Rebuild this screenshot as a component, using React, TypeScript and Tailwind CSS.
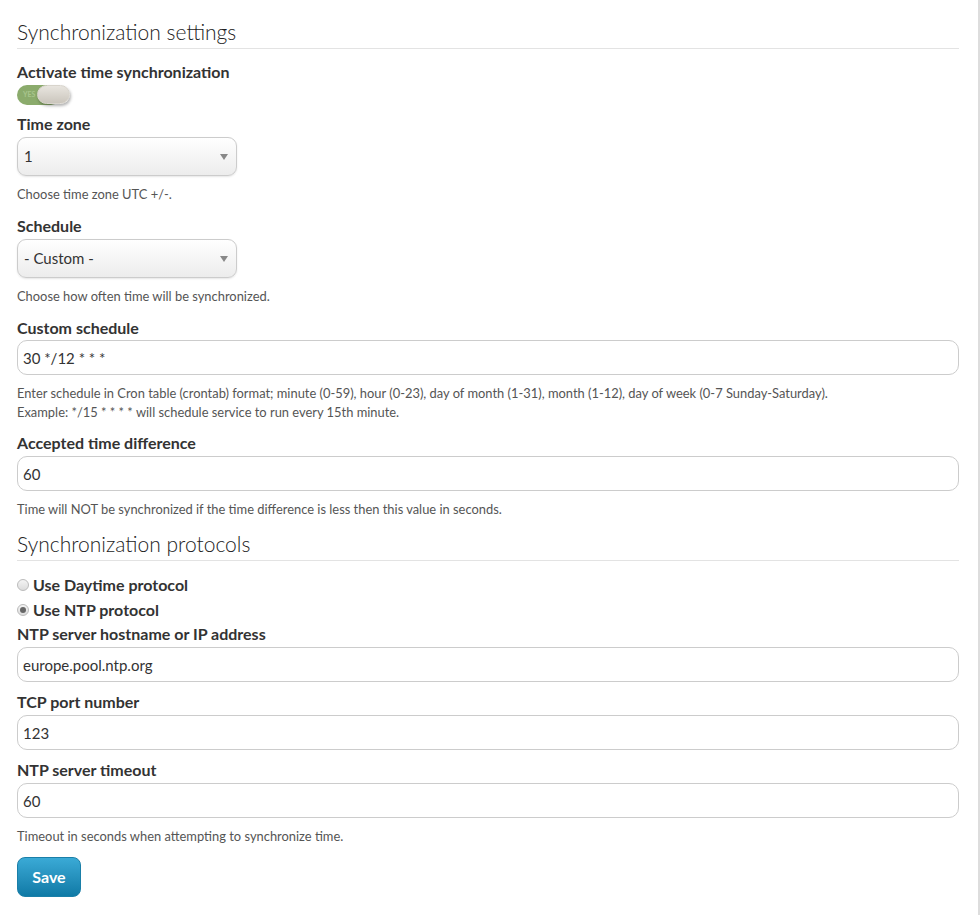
import { useState } from 'react'

const FONT = { fontFamily: 'Lato, "Noto Sans", sans-serif' }

function Label({ children }: { children: React.ReactNode }) {
  return <label className="block text-[16px] font-bold leading-[20px] text-[#333]">{children}</label>
}

function Help({ children }: { children: React.ReactNode }) {
  return <div className="text-[12.9px] leading-[19px] text-[#555]">{children}</div>
}

function TextInput({ value }: { value: string }) {
  const [v, setV] = useState(value)
  return (
    <input
      value={v}
      onChange={e => setV(e.target.value)}
      className="block h-[35px] w-full rounded-[10px] border border-[#ccc] bg-white px-[5px] text-[15px] text-[#333] outline-none"
    />
  )
}

function FakeSelect({ value }: { value: string }) {
  return (
    <div className="relative flex h-[39px] w-[220px] items-center rounded-[9px] border border-[#ccc] bg-gradient-to-b from-white to-[#ececec] px-[6px] text-[15px] text-[#333] shadow-[0_1px_2px_rgba(0,0,0,0.1)]">
      {value}
      <span className="absolute right-[8px] top-[16px] h-0 w-0 border-x-[4px] border-t-[6px] border-x-transparent border-t-[#888]" />
    </div>
  )
}

function Heading({ children }: { children: React.ReactNode }) {
  return (
    <h2 className="border-b border-[#e3e3e3] pb-[3px] text-[21px] font-light leading-[26px] text-[#222]">{children}</h2>
  )
}

function Radio({ label, checked }: { label: string; checked?: boolean }) {
  return (
    <label className="flex items-center gap-[4px] text-[16px] font-bold leading-[25px] text-[#333]">
      <span className="flex h-[12px] w-[12px] items-center justify-center rounded-full border border-[#bbb] bg-gradient-to-b from-[#f4f4f4] to-[#dcdcdc]">
        {checked && <span className="h-[6px] w-[6px] rounded-full bg-[#666]" />}
      </span>
      {label}
    </label>
  )
}

export default function App() {
  return (
    <div style={FONT} className="min-h-[915px] border-r-2 border-[#ddd] bg-white">
      <div className="mr-[19px] pl-[17px] pt-[19px]">
        <Heading>Synchronization settings</Heading>

        <div className="mt-[13px]">
          <Label>Activate time synchronization</Label>
          <div className="relative mt-[3px] h-[20px] w-[54px]">
            <div className="absolute left-0 top-0 h-[20px] w-[44px] rounded-full bg-[#8bab6c]">
              <span className="absolute left-[6px] top-[5px] text-[7px] font-bold leading-[9px] text-[#a8c58c]">YES</span>
            </div>
            <div className="absolute left-[20px] top-0 h-[19px] w-[33px] rounded-full border border-[#d8d4cc] bg-gradient-to-b from-[#e8e5df] to-[#cbc6bd] shadow-[1px_2px_3px_rgba(0,0,0,0.3)]" />
          </div>
        </div>

        <div className="mt-[9px]">
          <Label>Time zone</Label>
          <div className="mt-[3px]">
            <FakeSelect value="1" />
          </div>
          <div className="mt-[9px]">
            <Help>Choose time zone UTC +/-.</Help>
          </div>
        </div>

        <div className="mt-[12px]">
          <Label>Schedule</Label>
          <div className="mt-[3px]">
            <FakeSelect value="- Custom -" />
          </div>
          <div className="mt-[9px]">
            <Help>Choose how often time will be synchronized.</Help>
          </div>
        </div>

        <div className="mt-[12px]">
          <Label>Custom schedule</Label>
          <div className="mt-[2px]">
            <TextInput value="30 */12 * * *" />
          </div>
          <div className="mt-[9px]">
            <Help>
              Enter schedule in Cron table (crontab) format; minute (0-59), hour (0-23), day of month (1-31), month (1-12), day of week (0-7 Sunday-Saturday).
              <br />
              Example: */15 * * * * will schedule service to run every 15th minute.
            </Help>
          </div>
        </div>

        <div className="mt-[11px]">
          <Label>Accepted time difference</Label>
          <div className="mt-[3px]">
            <TextInput value="60" />
          </div>
          <div className="mt-[9px]">
            <Help>Time will NOT be synchronized if the time difference is less then this value in seconds.</Help>
          </div>
        </div>

        <div className="mt-[12px]">
          <Heading>Synchronization protocols</Heading>
        </div>

        <div className="mt-[11px]">
          <Radio label="Use Daytime protocol" />
          <Radio label="Use NTP protocol" checked />
        </div>

        <div className="mt-[2px]">
          <Label>NTP server hostname or IP address</Label>
          <div className="mt-[3px]">
            <TextInput value="europe.pool.ntp.org" />
          </div>
        </div>

        <div className="mt-[10px]">
          <Label>TCP port number</Label>
          <div className="mt-[3px]">
            <TextInput value="123" />
          </div>
        </div>

        <div className="mt-[10px]">
          <Label>NTP server timeout</Label>
          <div className="mt-[3px]">
            <TextInput value="60" />
          </div>
          <div className="mt-[9px]">
            <Help>Timeout in seconds when attempting to synchronize time.</Help>
          </div>
        </div>

        <button className="mt-[11px] h-[40px] w-[64px] rounded-[8px] border border-[#1a7fa8] bg-gradient-to-b from-[#3aaad6] to-[#0e7aa6] text-[16px] font-bold text-white">
          Save
        </button>
      </div>
    </div>
  )
}
